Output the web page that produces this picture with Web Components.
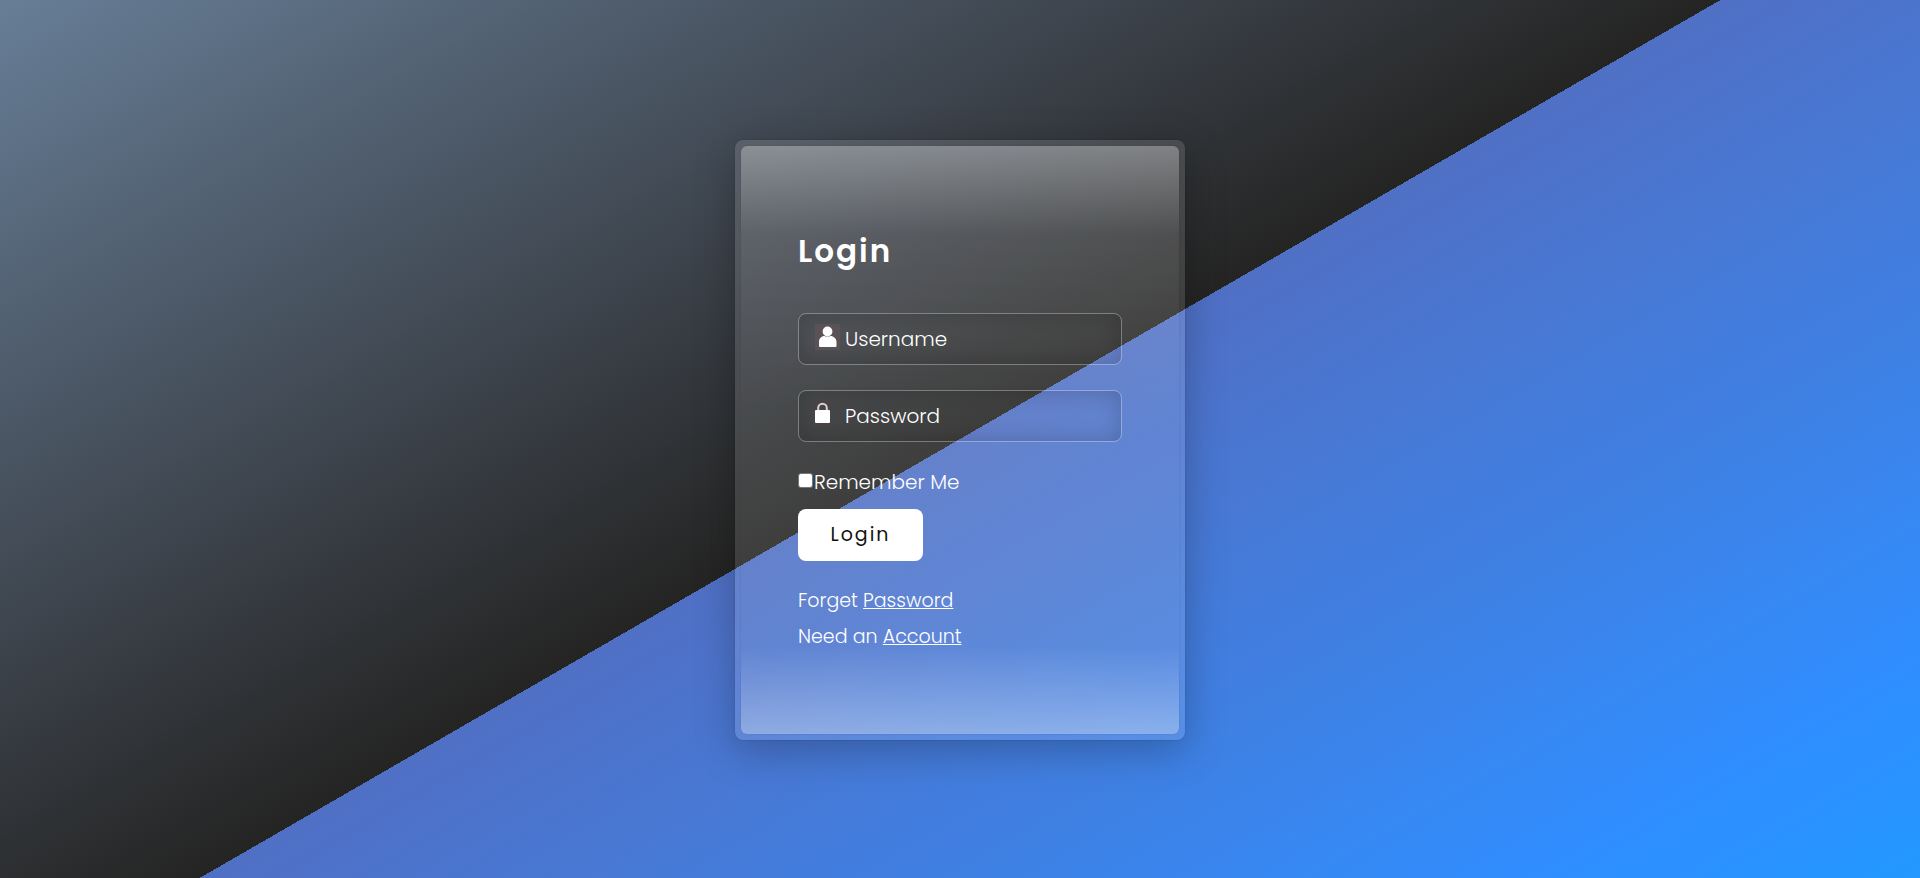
<!DOCTYPE html>
<html lang="en">
<head>
<meta charset="utf-8">
<title>Login</title>
<style>
html,body{height:100%}
body{margin:0;font-family:Poppins,Inter,sans-serif;color:#fff}
</style>
</head>
<body>
<login-page>
  <login-card heading="Login">
    <icon-field label="Username" type="text" name="username">
      <svg slot="icon" width="26" height="26" viewBox="-1 0 26 26"><rect width="25" height="26" fill="#5a5257"/><circle cx="12.500" cy="7.500" r="4.900" fill="#fff"/><path d="M4 20v-2c0-3.500 2.500-6 5.500-6 1 .7 5 .7 6 0 3 0 6 2.500 6 6V22q0 1-1 1H5q-1 0-1-1z" fill="#fff"/></svg>
    </icon-field>
    <icon-field label="Password" type="password" name="password">
      <svg slot="icon" width="17" height="26" viewBox="0 0 17 26"><rect width="17" height="26" fill="#4a4346"/><path d="M4.200 11V7a4.300 4.300 0 0 1 8.600 0v4" fill="none" stroke="#d8d4d6" stroke-width="2"/><rect x="1" y="9" width="15" height="13" rx="1" fill="#fff"/></svg>
    </icon-field>
    <check-option name="remember">Remember Me</check-option>
    <submit-button>Login</submit-button>
    <help-line slot="help" prefix="Forget" href="#password">Password</help-line>
    <help-line slot="help" prefix="Need an" href="#account">Account</help-line>
  </login-card>
</login-page>
<script>
class Base extends HTMLElement{
  constructor(){super();this.attachShadow({mode:'open'});}
  connectedCallback(){this.shadowRoot.innerHTML=this.render();}
}
customElements.define('login-page',class extends Base{
  render(){return `<style>
    :host{box-sizing:border-box;display:flex;align-items:center;justify-content:center;min-height:100vh;padding:26px 24px 24px;
      background:linear-gradient(150deg,#677e97 0%,#3b4149 34%,#242423 50%,#5070c5 50%,#3f80e3 72%,#308eff 89%,#2398ff 100%)}
  </style><slot></slot>`;}
});
customElements.define('login-card',class extends Base{
  render(){return `<style>
    :host{box-sizing:border-box;display:block;width:100%;max-width:450px;padding:6px;border-radius:8px;
      background:rgba(255,255,255,.12);box-shadow:0 10px 40px rgba(0,0,0,.26),0 0 2px rgba(0,0,0,.2)}
    form{box-sizing:border-box;display:flex;flex-direction:column;align-items:flex-start;min-height:588px;padding:80px 57px;border-radius:6px;
      background:linear-gradient(to bottom,rgba(255,255,255,.3),rgba(255,255,255,.06) 15%,rgba(255,255,255,0) 45%,rgba(255,255,255,0) 85%,rgba(255,255,255,.3));
      box-shadow:0 0 2px rgba(0,0,0,.15)}
    h1{margin:0 0 37px;font-size:31px;line-height:50px;font-weight:600;letter-spacing:2px}
    ::slotted(icon-field){margin-bottom:25px}
    .help{display:grid;gap:9px;margin-top:26px}
  </style><form><h1>${this.getAttribute('heading')}</h1><slot></slot><div class="help"><slot name="help"></slot></div></form>`;}
});
customElements.define('icon-field',class extends Base{
  render(){const l=this.getAttribute('label');return `<style>
    :host{display:block;width:100%}
    label{box-sizing:border-box;display:flex;height:52px;padding:10px 15px;border:1px solid rgba(255,255,255,.3);border-radius:8px;box-shadow:inset 0 0 24px rgba(0,0,0,.2)}
    .icon{flex:none;width:31px}
    ::slotted(svg){display:block}
    input{flex:1;min-width:0;padding:0;border:0;outline:0;background:none;color:#fff;font:300 20px/30px Poppins,Inter,sans-serif}
    input::placeholder{color:#fff;opacity:1}
  </style><label><span class="icon"><slot name="icon"></slot></span><input type="${this.getAttribute('type')}" name="${this.getAttribute('name')}" placeholder="${l}" aria-label="${l}"></label>`;}
});
customElements.define('check-option',class extends Base{
  render(){return `<style>
    :host{display:block;margin-bottom:12px}
    label{display:flex;align-items:center;font-size:20px;line-height:30px;font-weight:300}
    input{appearance:none;box-sizing:border-box;width:15px;height:15px;margin:0 1px 3px 0;border:1px solid #767676;border-radius:3px;background:#fff}
    input:checked{background:#0075ff}
  </style><label><input type="checkbox" name="${this.getAttribute('name')}"><slot></slot></label>`;}
});
customElements.define('submit-button',class extends Base{
  render(){return `<style>
    :host{display:block}
    button{box-sizing:border-box;width:125px;height:52px;padding:0;border:0;border-radius:8px;background:#fff;color:#111;font:400 19px/30px Poppins,Inter,sans-serif;letter-spacing:2px}
  </style><button type="button"><slot></slot></button>`;}
});
customElements.define('help-line',class extends Base{
  render(){return `<style>
    :host{display:block;font-size:19px;line-height:27px;font-weight:300}
    a{color:#fff;text-decoration:underline}
  </style>${this.getAttribute('prefix')} <a href="${this.getAttribute('href')}"><slot></slot></a>`;}
});
</script>
</body>
</html>
